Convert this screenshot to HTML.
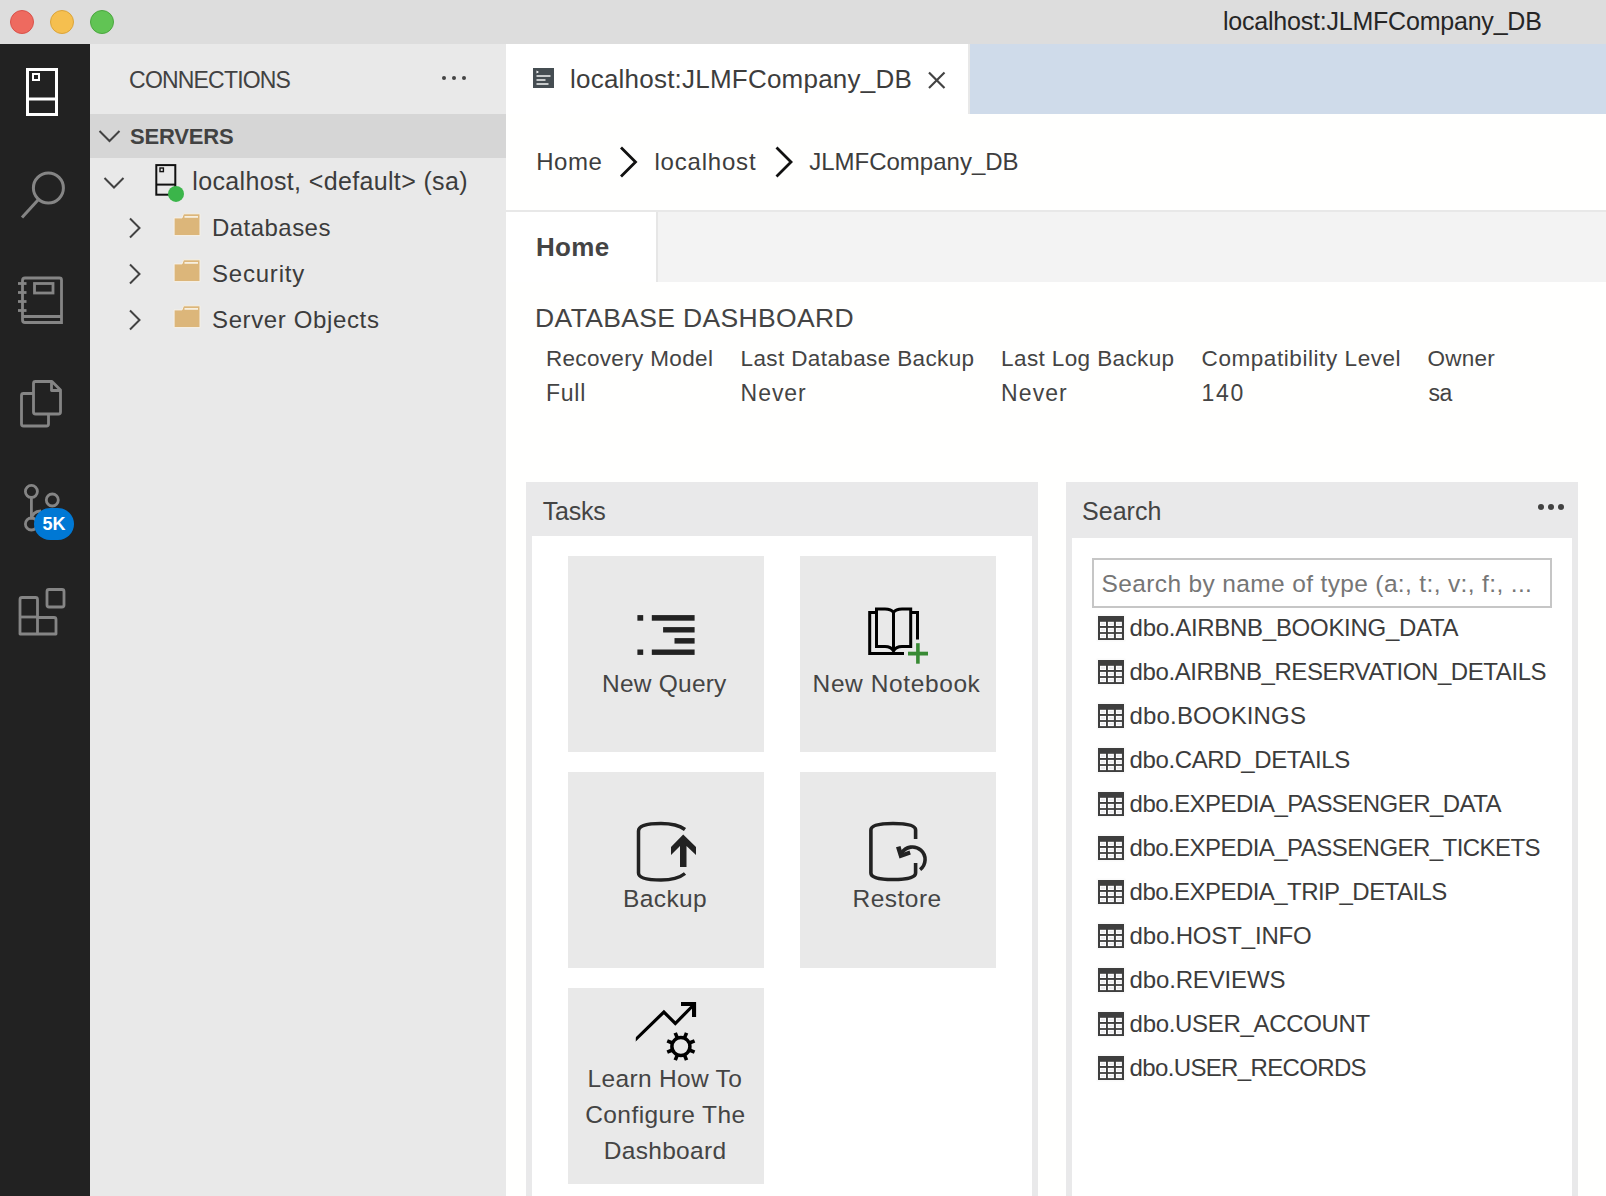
<!DOCTYPE html>
<html><head><meta charset="utf-8"><style>
html,body{margin:0;padding:0;width:1606px;height:1196px;overflow:hidden;background:#fff;}
body{position:relative;font-family:"Liberation Sans",sans-serif;}
.t{position:absolute;white-space:nowrap;line-height:1;}
svg{overflow:visible}
</style></head><body>
<div style="position:absolute;left:0px;top:0px;width:1606px;height:44px;background:#dddddd;"></div>
<div style="position:absolute;left:10px;top:10px;width:24px;height:24px;border-radius:50%;background:#ee6a5f;box-sizing:border-box;border:1px solid #d9524a;"></div>
<div style="position:absolute;left:50px;top:10px;width:24px;height:24px;border-radius:50%;background:#f5bf4f;box-sizing:border-box;border:1px solid #dba43a;"></div>
<div style="position:absolute;left:90px;top:10px;width:24px;height:24px;border-radius:50%;background:#61c454;box-sizing:border-box;border:1px solid #4ba73f;"></div>
<div class="t" style="left:1222.90px;top:9.24px;font-size:25px;letter-spacing:-0.207px;color:#262626;">localhost:JLMFCompany_DB</div>
<div style="position:absolute;left:0px;top:44px;width:90px;height:1152px;background:#222222;"></div>
<svg style="position:absolute;left:0;top:44px" width="90" height="1152" viewBox="0 44 90 1152">
<g fill="none" stroke="#ffffff" stroke-width="3">
<rect x="27.5" y="69.5" width="29" height="45"/>
<line x1="27.5" y1="99" x2="56.5" y2="99"/>
<rect x="33" y="74" width="6" height="6" stroke-width="2"/>
</g>
<g fill="none" stroke="#858585" stroke-width="3" stroke-linecap="butt">
<circle cx="48.4" cy="188" r="15"/>
<line x1="38" y1="200" x2="22" y2="217.5"/>
</g>
<g fill="none" stroke="#858585" stroke-width="2.8">
<path d="M25 278 H59.5 Q61.5 278 61.5 280 V322.5 H25 Q22.5 322.5 22.5 320 V280.5 Q22.5 278 25 278 Z"/>
<line x1="22.5" y1="316.5" x2="61.5" y2="316.5"/>
<rect x="34.5" y="33.5" width="0" height="0"/>
<rect x="34.5" y="283.5" width="18.5" height="9.5"/>
<line x1="18" y1="283.5" x2="26.5" y2="283.5"/>
<line x1="18" y1="292.5" x2="26.5" y2="292.5"/>
<line x1="18" y1="301.5" x2="26.5" y2="301.5"/>
<line x1="18" y1="310.5" x2="26.5" y2="310.5"/>
</g>
<g fill="none" stroke="#858585" stroke-width="2.8" stroke-linejoin="round">
<path d="M33 393.5 H23.5 Q21.5 393.5 21.5 395.5 V424 Q21.5 426 23.5 426 H46.5 Q48.5 426 48.5 424 V414.5"/>
<path d="M35.5 381.5 H52 L60.5 390 V412 Q60.5 414 58.5 414 H35.5 Q33.5 414 33.5 412 V383.5 Q33.5 381.5 35.5 381.5 Z"/>
<path d="M51.5 381.5 V390.5 H60.5"/>
</g>
<g fill="none" stroke="#858585" stroke-width="2.8">
<circle cx="31.4" cy="491.4" r="6"/>
<circle cx="52.3" cy="500" r="6"/>
<circle cx="31.4" cy="524" r="6"/>
<line x1="31.4" y1="497.4" x2="31.4" y2="518"/>
<path d="M31.4 519.5 Q32 511.5 41 511"/>
</g>
<rect x="34" y="508" width="40" height="32" rx="16" fill="#0078d4"/>
<text x="54" y="530" font-family="Liberation Sans" font-weight="bold" font-size="18" fill="#ffffff" text-anchor="middle">5K</text>
<g fill="none" stroke="#858585" stroke-width="2.8" stroke-linejoin="round">
<path d="M20 617 V634 H56 V619.5 Q56 617.5 54 617.5 H37.5 V599.5 Q37.5 597.5 35.5 597.5 H22 Q20 597.5 20 599.5 Z"/>
<line x1="20" y1="617" x2="37.5" y2="617"/>
<line x1="37.5" y1="617" x2="37.5" y2="634"/>
<rect x="47" y="589.5" width="17" height="17.5" rx="2"/>
</g>
</svg>
<div style="position:absolute;left:90px;top:44px;width:416px;height:1152px;background:#e9e9e9;"></div>
<div class="t" style="left:129.10px;top:69.33px;font-size:23px;letter-spacing:-0.811px;color:#424242;">CONNECTIONS</div>
<div style="position:absolute;left:442px;top:76px;width:4px;height:4px;border-radius:50%;background:#444;"></div>
<div style="position:absolute;left:452px;top:76px;width:4px;height:4px;border-radius:50%;background:#444;"></div>
<div style="position:absolute;left:462px;top:76px;width:4px;height:4px;border-radius:50%;background:#444;"></div>
<div style="position:absolute;left:90px;top:114px;width:416px;height:44px;background:#d6d6d6;"></div>
<div class="t" style="left:130.10px;top:125.58px;font-size:22px;font-weight:bold;letter-spacing:-0.212px;color:#424242;">SERVERS</div>
<svg style="position:absolute;left:90px;top:114px" width="416" height="240" viewBox="90 114 416 240">
<g fill="none" stroke="#424242" stroke-width="2">
<polyline points="99.5,131 109.5,141 119.5,131"/>
<polyline points="104.5,178 114,187.5 123.5,178"/>
<polyline points="130,218.5 139.5,228 130,237.5"/>
<polyline points="130,264.5 139.5,274 130,283.5"/>
<polyline points="130,310.5 139.5,320 130,329.5"/>
</g>
<g fill="none" stroke="#111" stroke-width="2">
<rect x="156.3" y="165.1" width="19" height="29.6"/>
<line x1="156.3" y1="184.6" x2="175.3" y2="184.6"/>
<rect x="160" y="168" width="3.4" height="3.6" stroke-width="1.4"/>
</g>
<circle cx="176" cy="193.9" r="8" fill="#3bb54a"/>
</svg>
<div class="t" style="left:192.30px;top:169.34px;font-size:25px;letter-spacing:0.350px;color:#3c3c3c;">localhost, &lt;default&gt; (sa)</div>
<svg style="position:absolute;left:172px;top:212px" width="30" height="26" viewBox="172 212 30 26">
<path d="M174.1 217.9 H182 L183.5 213.8 H200 V235.6 H174.1 Z" fill="#dcb67a" stroke="#f6f1e8" stroke-width="1"/>
<rect x="184.5" y="216" width="13.5" height="1.8" fill="#f7efe0"/>
</svg>
<div class="t" style="left:212.00px;top:215.58px;font-size:24px;letter-spacing:0.458px;color:#3c3c3c;">Databases</div>
<svg style="position:absolute;left:172px;top:258px" width="30" height="26" viewBox="172 212 30 26">
<path d="M174.1 217.9 H182 L183.5 213.8 H200 V235.6 H174.1 Z" fill="#dcb67a" stroke="#f6f1e8" stroke-width="1"/>
<rect x="184.5" y="216" width="13.5" height="1.8" fill="#f7efe0"/>
</svg>
<div class="t" style="left:212.00px;top:261.58px;font-size:24px;letter-spacing:0.786px;color:#3c3c3c;">Security</div>
<svg style="position:absolute;left:172px;top:304px" width="30" height="26" viewBox="172 212 30 26">
<path d="M174.1 217.9 H182 L183.5 213.8 H200 V235.6 H174.1 Z" fill="#dcb67a" stroke="#f6f1e8" stroke-width="1"/>
<rect x="184.5" y="216" width="13.5" height="1.8" fill="#f7efe0"/>
</svg>
<div class="t" style="left:212.00px;top:307.58px;font-size:24px;letter-spacing:0.629px;color:#3c3c3c;">Server Objects</div>
<div style="position:absolute;left:506px;top:44px;width:1100px;height:70px;background:#cfdbea;"></div>
<div style="position:absolute;left:506px;top:44px;width:462px;height:70px;background:#ffffff;"></div>
<div style="position:absolute;left:968px;top:44px;width:2px;height:70px;background:#e8e8e8;"></div>
<svg style="position:absolute;left:530px;top:64px" width="30" height="28" viewBox="530 64 30 28">
<rect x="533" y="68" width="21" height="20" fill="#454d52"/>
<path d="M536.5 70.5 L539 72 L536.5 73.5 Z" fill="#fff"/>
<rect x="536.5" y="75.3" width="14" height="1.4" fill="#fff"/>
<rect x="536.5" y="79.3" width="9" height="1.4" fill="#fff"/>
<rect x="536.5" y="83.3" width="12" height="1.4" fill="#fff"/>
</svg>
<div class="t" style="left:570.00px;top:66.39px;font-size:26px;letter-spacing:0.220px;color:#3d3d3d;">localhost:JLMFCompany_DB</div>
<svg style="position:absolute;left:920px;top:64px" width="32" height="32" viewBox="920 64 32 32">
<g stroke="#424242" stroke-width="2.2"><line x1="929" y1="72.5" x2="944.5" y2="88"/><line x1="944.5" y1="72.5" x2="929" y2="88"/></g>
</svg>
<div style="position:absolute;left:506px;top:114px;width:1100px;height:96px;background:#fffffe;"></div>
<div class="t" style="left:536.30px;top:149.88px;font-size:24px;letter-spacing:0.476px;color:#3d3d3d;">Home</div>
<div class="t" style="left:654.40px;top:149.88px;font-size:24px;letter-spacing:0.806px;color:#3d3d3d;">localhost</div>
<div class="t" style="left:809.20px;top:149.88px;font-size:24px;color:#3d3d3d;">JLMFCompany_DB</div>
<svg style="position:absolute;left:600px;top:130px" width="220" height="60" viewBox="600 130 220 60">
<g fill="none" stroke="#111" stroke-width="2.8">
<polyline points="621,147.5 635.5,162 621,176.5"/>
<polyline points="776.5,147.5 791,162 776.5,176.5"/>
</g></svg>
<div style="position:absolute;left:506px;top:210px;width:1100px;height:2px;background:#e8e8e8;"></div>
<div style="position:absolute;left:506px;top:212px;width:1100px;height:70px;background:#f3f3f3;"></div>
<div style="position:absolute;left:506px;top:212px;width:150px;height:70px;background:#ffffff;"></div>
<div style="position:absolute;left:656px;top:212px;width:2px;height:70px;background:#e6e6e6;"></div>
<div class="t" style="left:536.00px;top:234.39px;font-size:26px;font-weight:bold;letter-spacing:0.341px;color:#444444;">Home</div>
<div style="position:absolute;left:506px;top:282px;width:1100px;height:914px;background:#fffffe;"></div>
<div class="t" style="left:535.10px;top:304.57px;font-size:26.5px;letter-spacing:0.345px;color:#444444;">DATABASE DASHBOARD</div>
<div class="t" style="left:545.90px;top:348.15px;font-size:22.5px;letter-spacing:0.341px;color:#444444;">Recovery Model</div>
<div class="t" style="left:545.90px;top:382.33px;font-size:23px;letter-spacing:0.816px;color:#444444;">Full</div>
<div class="t" style="left:740.60px;top:348.15px;font-size:22.5px;letter-spacing:0.375px;color:#444444;">Last Database Backup</div>
<div class="t" style="left:740.60px;top:382.33px;font-size:23px;letter-spacing:0.952px;color:#444444;">Never</div>
<div class="t" style="left:1001.10px;top:348.15px;font-size:22.5px;letter-spacing:0.385px;color:#444444;">Last Log Backup</div>
<div class="t" style="left:1001.10px;top:382.33px;font-size:23px;letter-spacing:1.077px;color:#444444;">Never</div>
<div class="t" style="left:1201.60px;top:348.15px;font-size:22.5px;letter-spacing:0.565px;color:#444444;">Compatibility Level</div>
<div class="t" style="left:1201.60px;top:382.33px;font-size:23px;letter-spacing:1.708px;color:#444444;">140</div>
<div class="t" style="left:1427.60px;top:348.15px;font-size:22.5px;letter-spacing:0.206px;color:#444444;">Owner</div>
<div class="t" style="left:1428.60px;top:382.33px;font-size:23px;letter-spacing:-0.500px;color:#444444;">sa</div>
<div style="position:absolute;left:526px;top:482px;width:512px;height:714px;background:#e9e9ea;"></div>
<div style="position:absolute;left:532px;top:536px;width:500px;height:660px;background:#ffffff;"></div>
<div class="t" style="left:542.70px;top:499.34px;font-size:25px;letter-spacing:-0.201px;color:#444444;">Tasks</div>
<div style="position:absolute;left:568px;top:556px;width:196px;height:196px;background:#e9e9e9;"></div>
<div style="position:absolute;left:800px;top:556px;width:196px;height:196px;background:#e9e9e9;"></div>
<div style="position:absolute;left:568px;top:772px;width:196px;height:196px;background:#e9e9e9;"></div>
<div style="position:absolute;left:800px;top:772px;width:196px;height:196px;background:#e9e9e9;"></div>
<div style="position:absolute;left:568px;top:988px;width:196px;height:196px;background:#e9e9e9;"></div>
<div class="t" style="left:602.10px;top:671.66px;font-size:24.5px;letter-spacing:0.214px;color:#444444;">New Query</div>
<div class="t" style="left:812.60px;top:671.66px;font-size:24.5px;letter-spacing:0.596px;color:#444444;">New Notebook</div>
<div class="t" style="left:623.10px;top:887.36px;font-size:24.5px;letter-spacing:0.381px;color:#444444;">Backup</div>
<div class="t" style="left:852.60px;top:887.36px;font-size:24.5px;letter-spacing:0.473px;color:#444444;">Restore</div>
<div class="t" style="left:587.60px;top:1067.26px;font-size:24.5px;letter-spacing:0.315px;color:#444444;">Learn How To</div>
<div class="t" style="left:585.20px;top:1103.46px;font-size:24.5px;letter-spacing:0.431px;color:#444444;">Configure The</div>
<div class="t" style="left:603.70px;top:1139.26px;font-size:24.5px;letter-spacing:0.321px;color:#444444;">Dashboard</div>
<svg style="position:absolute;left:568px;top:556px" width="428" height="628" viewBox="568 556 428 628">
<g fill="#222">
<rect x="637.4" y="615.1" width="5.8" height="5.6"/><rect x="651.8" y="615.1" width="42.8" height="5.6"/>
<rect x="663.1" y="627.1" width="31.5" height="5.4"/>
<rect x="674.5" y="638.1" width="20.1" height="5.5"/>
<rect x="637.4" y="649.5" width="5.8" height="5.4"/><rect x="651.8" y="649.5" width="42.8" height="5.4"/>
</g>
<g fill="none" stroke="#000" stroke-width="3" stroke-linejoin="miter">
<path d="M876.5 612.5 H869.7 V653.5 H904"/>
<path d="M910.5 612.5 H917.5 V639.5"/>
<path d="M876.5 646.5 V609 H885 Q891 609 893.5 612.5 Q896 609 902 609 H910.7 V646.5 H902 Q896 646.5 893.5 651 Q891 646.5 885 646.5 Z"/><line x1="893.5" y1="612" x2="893.5" y2="651"/>
</g>
<g fill="#388a34">
<rect x="908" y="651.7" width="20" height="3.8"/>
<rect x="916.1" y="643.2" width="3.6" height="20.5"/>
</g>
<g fill="none" stroke="#222" stroke-width="3.5">
<path d="M685 829.5 Q677 823.5 661 823.5 Q638.5 823.5 638.5 831 V873 Q638.5 880 661 880 Q677 880 685 873.5"/>
</g>
<path d="M683.2 834.5 L696 847 V855 L686.5 846 V867 H680 V846 L671 855 V847 Z" fill="#222"/>
<g fill="none" stroke="#222" stroke-width="3.6">
<path d="M915.6 839 V830 Q915.6 823.5 893 823.5 Q870.9 823.5 870.9 830 V873 Q870.9 879.5 893 879.5 Q915.6 879.5 915.6 873 V863"/>
<path d="M901.6 853.2 A12.6 12.6 0 1 1 920.1 869.6"/>
</g>
<path d="M896 847.3 L900.5 846 L902.5 853 L909.5 850.6 L910.8 854.5 L899.5 858.5 Z" fill="#222"/>
<defs><clipPath id="lclip"><rect x="635.8" y="990" width="80" height="80"/></clipPath></defs><g fill="none" stroke="#000" stroke-width="3.2" stroke-linejoin="miter">
<path clip-path="url(#lclip)" d="M630 1045 L663.9 1012 L675.3 1023.5 L694 1004.5"/>
</g>
<path d="M681 1002 H696.1 V1017 H692 V1006 H681 Z" fill="#000"/>
<g transform="translate(680.9 1046.5)">
<circle r="9" fill="none" stroke="#000" stroke-width="3.5"/>
<g fill="#000">
<rect x="-1.8" y="-14.8" width="3.6" height="6.3" transform="rotate(22.5)"/>
<rect x="-1.8" y="-14.8" width="3.6" height="6.3" transform="rotate(67.5)"/>
<rect x="-1.8" y="-14.8" width="3.6" height="6.3" transform="rotate(112.5)"/>
<rect x="-1.8" y="-14.8" width="3.6" height="6.3" transform="rotate(157.5)"/>
<rect x="-1.8" y="-14.8" width="3.6" height="6.3" transform="rotate(202.5)"/>
<rect x="-1.8" y="-14.8" width="3.6" height="6.3" transform="rotate(247.5)"/>
<rect x="-1.8" y="-14.8" width="3.6" height="6.3" transform="rotate(292.5)"/>
<rect x="-1.8" y="-14.8" width="3.6" height="6.3" transform="rotate(337.5)"/>
</g></g>
</svg>
<div style="position:absolute;left:1066px;top:482px;width:512px;height:714px;background:#e9e9ea;"></div>
<div style="position:absolute;left:1072px;top:538px;width:500px;height:658px;background:#ffffff;"></div>
<div class="t" style="left:1082.10px;top:499.04px;font-size:25px;color:#444444;">Search</div>
<div style="position:absolute;left:1538px;top:504px;width:6px;height:6px;border-radius:50%;background:#424242;"></div>
<div style="position:absolute;left:1548px;top:504px;width:6px;height:6px;border-radius:50%;background:#424242;"></div>
<div style="position:absolute;left:1558px;top:504px;width:6px;height:6px;border-radius:50%;background:#424242;"></div>
<div style="position:absolute;left:1092px;top:558px;width:460px;height:50px;box-sizing:border-box;border:2px solid #c6c6c6;background:#fff;"></div>
<div class="t" style="left:1101.60px;top:571.66px;font-size:24.5px;letter-spacing:0.357px;color:#767676;">Search by name of type (a:, t:, v:, f:, ...</div>
<svg style="position:absolute;left:1092px;top:610px" width="40" height="34" viewBox="1092 610 40 34"><rect x="1096.5" y="614.5" width="29" height="27" fill="#fafafa"/><rect x="1098" y="616" width="26" height="24" fill="#3e3e3e"/><g transform="translate(1092 610)"><rect x="8" y="11.8" width="6" height="4.2" fill="#ffffff"/><rect x="9" y="12.8" width="4" height="2.2" fill="#ececf0"/><rect x="15.9" y="11.8" width="6" height="4.2" fill="#ffffff"/><rect x="16.9" y="12.8" width="4" height="2.2" fill="#ececf0"/><rect x="23.9" y="11.8" width="6" height="4.2" fill="#ffffff"/><rect x="24.9" y="12.8" width="4" height="2.2" fill="#ececf0"/><rect x="8" y="17.9" width="6" height="4.2" fill="#ffffff"/><rect x="9" y="18.9" width="4" height="2.2" fill="#ececf0"/><rect x="15.9" y="17.9" width="6" height="4.2" fill="#ffffff"/><rect x="16.9" y="18.9" width="4" height="2.2" fill="#ececf0"/><rect x="23.9" y="17.9" width="6" height="4.2" fill="#ffffff"/><rect x="24.9" y="18.9" width="4" height="2.2" fill="#ececf0"/><rect x="8" y="23.9" width="6" height="4.2" fill="#ffffff"/><rect x="9" y="24.9" width="4" height="2.2" fill="#ececf0"/><rect x="15.9" y="23.9" width="6" height="4.2" fill="#ffffff"/><rect x="16.9" y="24.9" width="4" height="2.2" fill="#ececf0"/><rect x="23.9" y="23.9" width="6" height="4.2" fill="#ffffff"/><rect x="24.9" y="24.9" width="4" height="2.2" fill="#ececf0"/></g></svg>
<div class="t" style="left:1129.60px;top:615.78px;font-size:24px;letter-spacing:-0.283px;color:#3c3c3c;">dbo.AIRBNB_BOOKING_DATA</div>
<svg style="position:absolute;left:1092px;top:654px" width="40" height="34" viewBox="1092 610 40 34"><rect x="1096.5" y="614.5" width="29" height="27" fill="#fafafa"/><rect x="1098" y="616" width="26" height="24" fill="#3e3e3e"/><g transform="translate(1092 610)"><rect x="8" y="11.8" width="6" height="4.2" fill="#ffffff"/><rect x="9" y="12.8" width="4" height="2.2" fill="#ececf0"/><rect x="15.9" y="11.8" width="6" height="4.2" fill="#ffffff"/><rect x="16.9" y="12.8" width="4" height="2.2" fill="#ececf0"/><rect x="23.9" y="11.8" width="6" height="4.2" fill="#ffffff"/><rect x="24.9" y="12.8" width="4" height="2.2" fill="#ececf0"/><rect x="8" y="17.9" width="6" height="4.2" fill="#ffffff"/><rect x="9" y="18.9" width="4" height="2.2" fill="#ececf0"/><rect x="15.9" y="17.9" width="6" height="4.2" fill="#ffffff"/><rect x="16.9" y="18.9" width="4" height="2.2" fill="#ececf0"/><rect x="23.9" y="17.9" width="6" height="4.2" fill="#ffffff"/><rect x="24.9" y="18.9" width="4" height="2.2" fill="#ececf0"/><rect x="8" y="23.9" width="6" height="4.2" fill="#ffffff"/><rect x="9" y="24.9" width="4" height="2.2" fill="#ececf0"/><rect x="15.9" y="23.9" width="6" height="4.2" fill="#ffffff"/><rect x="16.9" y="24.9" width="4" height="2.2" fill="#ececf0"/><rect x="23.9" y="23.9" width="6" height="4.2" fill="#ffffff"/><rect x="24.9" y="24.9" width="4" height="2.2" fill="#ececf0"/></g></svg>
<div class="t" style="left:1129.60px;top:659.78px;font-size:24px;letter-spacing:-0.415px;color:#3c3c3c;">dbo.AIRBNB_RESERVATION_DETAILS</div>
<svg style="position:absolute;left:1092px;top:698px" width="40" height="34" viewBox="1092 610 40 34"><rect x="1096.5" y="614.5" width="29" height="27" fill="#fafafa"/><rect x="1098" y="616" width="26" height="24" fill="#3e3e3e"/><g transform="translate(1092 610)"><rect x="8" y="11.8" width="6" height="4.2" fill="#ffffff"/><rect x="9" y="12.8" width="4" height="2.2" fill="#ececf0"/><rect x="15.9" y="11.8" width="6" height="4.2" fill="#ffffff"/><rect x="16.9" y="12.8" width="4" height="2.2" fill="#ececf0"/><rect x="23.9" y="11.8" width="6" height="4.2" fill="#ffffff"/><rect x="24.9" y="12.8" width="4" height="2.2" fill="#ececf0"/><rect x="8" y="17.9" width="6" height="4.2" fill="#ffffff"/><rect x="9" y="18.9" width="4" height="2.2" fill="#ececf0"/><rect x="15.9" y="17.9" width="6" height="4.2" fill="#ffffff"/><rect x="16.9" y="18.9" width="4" height="2.2" fill="#ececf0"/><rect x="23.9" y="17.9" width="6" height="4.2" fill="#ffffff"/><rect x="24.9" y="18.9" width="4" height="2.2" fill="#ececf0"/><rect x="8" y="23.9" width="6" height="4.2" fill="#ffffff"/><rect x="9" y="24.9" width="4" height="2.2" fill="#ececf0"/><rect x="15.9" y="23.9" width="6" height="4.2" fill="#ffffff"/><rect x="16.9" y="24.9" width="4" height="2.2" fill="#ececf0"/><rect x="23.9" y="23.9" width="6" height="4.2" fill="#ffffff"/><rect x="24.9" y="24.9" width="4" height="2.2" fill="#ececf0"/></g></svg>
<div class="t" style="left:1129.60px;top:703.78px;font-size:24px;letter-spacing:0.143px;color:#3c3c3c;">dbo.BOOKINGS</div>
<svg style="position:absolute;left:1092px;top:742px" width="40" height="34" viewBox="1092 610 40 34"><rect x="1096.5" y="614.5" width="29" height="27" fill="#fafafa"/><rect x="1098" y="616" width="26" height="24" fill="#3e3e3e"/><g transform="translate(1092 610)"><rect x="8" y="11.8" width="6" height="4.2" fill="#ffffff"/><rect x="9" y="12.8" width="4" height="2.2" fill="#ececf0"/><rect x="15.9" y="11.8" width="6" height="4.2" fill="#ffffff"/><rect x="16.9" y="12.8" width="4" height="2.2" fill="#ececf0"/><rect x="23.9" y="11.8" width="6" height="4.2" fill="#ffffff"/><rect x="24.9" y="12.8" width="4" height="2.2" fill="#ececf0"/><rect x="8" y="17.9" width="6" height="4.2" fill="#ffffff"/><rect x="9" y="18.9" width="4" height="2.2" fill="#ececf0"/><rect x="15.9" y="17.9" width="6" height="4.2" fill="#ffffff"/><rect x="16.9" y="18.9" width="4" height="2.2" fill="#ececf0"/><rect x="23.9" y="17.9" width="6" height="4.2" fill="#ffffff"/><rect x="24.9" y="18.9" width="4" height="2.2" fill="#ececf0"/><rect x="8" y="23.9" width="6" height="4.2" fill="#ffffff"/><rect x="9" y="24.9" width="4" height="2.2" fill="#ececf0"/><rect x="15.9" y="23.9" width="6" height="4.2" fill="#ffffff"/><rect x="16.9" y="24.9" width="4" height="2.2" fill="#ececf0"/><rect x="23.9" y="23.9" width="6" height="4.2" fill="#ffffff"/><rect x="24.9" y="24.9" width="4" height="2.2" fill="#ececf0"/></g></svg>
<div class="t" style="left:1129.60px;top:747.78px;font-size:24px;letter-spacing:-0.380px;color:#3c3c3c;">dbo.CARD_DETAILS</div>
<svg style="position:absolute;left:1092px;top:786px" width="40" height="34" viewBox="1092 610 40 34"><rect x="1096.5" y="614.5" width="29" height="27" fill="#fafafa"/><rect x="1098" y="616" width="26" height="24" fill="#3e3e3e"/><g transform="translate(1092 610)"><rect x="8" y="11.8" width="6" height="4.2" fill="#ffffff"/><rect x="9" y="12.8" width="4" height="2.2" fill="#ececf0"/><rect x="15.9" y="11.8" width="6" height="4.2" fill="#ffffff"/><rect x="16.9" y="12.8" width="4" height="2.2" fill="#ececf0"/><rect x="23.9" y="11.8" width="6" height="4.2" fill="#ffffff"/><rect x="24.9" y="12.8" width="4" height="2.2" fill="#ececf0"/><rect x="8" y="17.9" width="6" height="4.2" fill="#ffffff"/><rect x="9" y="18.9" width="4" height="2.2" fill="#ececf0"/><rect x="15.9" y="17.9" width="6" height="4.2" fill="#ffffff"/><rect x="16.9" y="18.9" width="4" height="2.2" fill="#ececf0"/><rect x="23.9" y="17.9" width="6" height="4.2" fill="#ffffff"/><rect x="24.9" y="18.9" width="4" height="2.2" fill="#ececf0"/><rect x="8" y="23.9" width="6" height="4.2" fill="#ffffff"/><rect x="9" y="24.9" width="4" height="2.2" fill="#ececf0"/><rect x="15.9" y="23.9" width="6" height="4.2" fill="#ffffff"/><rect x="16.9" y="24.9" width="4" height="2.2" fill="#ececf0"/><rect x="23.9" y="23.9" width="6" height="4.2" fill="#ffffff"/><rect x="24.9" y="24.9" width="4" height="2.2" fill="#ececf0"/></g></svg>
<div class="t" style="left:1129.60px;top:791.78px;font-size:24px;letter-spacing:-0.539px;color:#3c3c3c;">dbo.EXPEDIA_PASSENGER_DATA</div>
<svg style="position:absolute;left:1092px;top:830px" width="40" height="34" viewBox="1092 610 40 34"><rect x="1096.5" y="614.5" width="29" height="27" fill="#fafafa"/><rect x="1098" y="616" width="26" height="24" fill="#3e3e3e"/><g transform="translate(1092 610)"><rect x="8" y="11.8" width="6" height="4.2" fill="#ffffff"/><rect x="9" y="12.8" width="4" height="2.2" fill="#ececf0"/><rect x="15.9" y="11.8" width="6" height="4.2" fill="#ffffff"/><rect x="16.9" y="12.8" width="4" height="2.2" fill="#ececf0"/><rect x="23.9" y="11.8" width="6" height="4.2" fill="#ffffff"/><rect x="24.9" y="12.8" width="4" height="2.2" fill="#ececf0"/><rect x="8" y="17.9" width="6" height="4.2" fill="#ffffff"/><rect x="9" y="18.9" width="4" height="2.2" fill="#ececf0"/><rect x="15.9" y="17.9" width="6" height="4.2" fill="#ffffff"/><rect x="16.9" y="18.9" width="4" height="2.2" fill="#ececf0"/><rect x="23.9" y="17.9" width="6" height="4.2" fill="#ffffff"/><rect x="24.9" y="18.9" width="4" height="2.2" fill="#ececf0"/><rect x="8" y="23.9" width="6" height="4.2" fill="#ffffff"/><rect x="9" y="24.9" width="4" height="2.2" fill="#ececf0"/><rect x="15.9" y="23.9" width="6" height="4.2" fill="#ffffff"/><rect x="16.9" y="24.9" width="4" height="2.2" fill="#ececf0"/><rect x="23.9" y="23.9" width="6" height="4.2" fill="#ffffff"/><rect x="24.9" y="24.9" width="4" height="2.2" fill="#ececf0"/></g></svg>
<div class="t" style="left:1129.60px;top:835.78px;font-size:24px;letter-spacing:-0.549px;color:#3c3c3c;">dbo.EXPEDIA_PASSENGER_TICKETS</div>
<svg style="position:absolute;left:1092px;top:874px" width="40" height="34" viewBox="1092 610 40 34"><rect x="1096.5" y="614.5" width="29" height="27" fill="#fafafa"/><rect x="1098" y="616" width="26" height="24" fill="#3e3e3e"/><g transform="translate(1092 610)"><rect x="8" y="11.8" width="6" height="4.2" fill="#ffffff"/><rect x="9" y="12.8" width="4" height="2.2" fill="#ececf0"/><rect x="15.9" y="11.8" width="6" height="4.2" fill="#ffffff"/><rect x="16.9" y="12.8" width="4" height="2.2" fill="#ececf0"/><rect x="23.9" y="11.8" width="6" height="4.2" fill="#ffffff"/><rect x="24.9" y="12.8" width="4" height="2.2" fill="#ececf0"/><rect x="8" y="17.9" width="6" height="4.2" fill="#ffffff"/><rect x="9" y="18.9" width="4" height="2.2" fill="#ececf0"/><rect x="15.9" y="17.9" width="6" height="4.2" fill="#ffffff"/><rect x="16.9" y="18.9" width="4" height="2.2" fill="#ececf0"/><rect x="23.9" y="17.9" width="6" height="4.2" fill="#ffffff"/><rect x="24.9" y="18.9" width="4" height="2.2" fill="#ececf0"/><rect x="8" y="23.9" width="6" height="4.2" fill="#ffffff"/><rect x="9" y="24.9" width="4" height="2.2" fill="#ececf0"/><rect x="15.9" y="23.9" width="6" height="4.2" fill="#ffffff"/><rect x="16.9" y="24.9" width="4" height="2.2" fill="#ececf0"/><rect x="23.9" y="23.9" width="6" height="4.2" fill="#ffffff"/><rect x="24.9" y="24.9" width="4" height="2.2" fill="#ececf0"/></g></svg>
<div class="t" style="left:1129.60px;top:879.78px;font-size:24px;letter-spacing:-0.550px;color:#3c3c3c;">dbo.EXPEDIA_TRIP_DETAILS</div>
<svg style="position:absolute;left:1092px;top:918px" width="40" height="34" viewBox="1092 610 40 34"><rect x="1096.5" y="614.5" width="29" height="27" fill="#fafafa"/><rect x="1098" y="616" width="26" height="24" fill="#3e3e3e"/><g transform="translate(1092 610)"><rect x="8" y="11.8" width="6" height="4.2" fill="#ffffff"/><rect x="9" y="12.8" width="4" height="2.2" fill="#ececf0"/><rect x="15.9" y="11.8" width="6" height="4.2" fill="#ffffff"/><rect x="16.9" y="12.8" width="4" height="2.2" fill="#ececf0"/><rect x="23.9" y="11.8" width="6" height="4.2" fill="#ffffff"/><rect x="24.9" y="12.8" width="4" height="2.2" fill="#ececf0"/><rect x="8" y="17.9" width="6" height="4.2" fill="#ffffff"/><rect x="9" y="18.9" width="4" height="2.2" fill="#ececf0"/><rect x="15.9" y="17.9" width="6" height="4.2" fill="#ffffff"/><rect x="16.9" y="18.9" width="4" height="2.2" fill="#ececf0"/><rect x="23.9" y="17.9" width="6" height="4.2" fill="#ffffff"/><rect x="24.9" y="18.9" width="4" height="2.2" fill="#ececf0"/><rect x="8" y="23.9" width="6" height="4.2" fill="#ffffff"/><rect x="9" y="24.9" width="4" height="2.2" fill="#ececf0"/><rect x="15.9" y="23.9" width="6" height="4.2" fill="#ffffff"/><rect x="16.9" y="24.9" width="4" height="2.2" fill="#ececf0"/><rect x="23.9" y="23.9" width="6" height="4.2" fill="#ffffff"/><rect x="24.9" y="24.9" width="4" height="2.2" fill="#ececf0"/></g></svg>
<div class="t" style="left:1129.60px;top:923.78px;font-size:24px;letter-spacing:-0.157px;color:#3c3c3c;">dbo.HOST_INFO</div>
<svg style="position:absolute;left:1092px;top:962px" width="40" height="34" viewBox="1092 610 40 34"><rect x="1096.5" y="614.5" width="29" height="27" fill="#fafafa"/><rect x="1098" y="616" width="26" height="24" fill="#3e3e3e"/><g transform="translate(1092 610)"><rect x="8" y="11.8" width="6" height="4.2" fill="#ffffff"/><rect x="9" y="12.8" width="4" height="2.2" fill="#ececf0"/><rect x="15.9" y="11.8" width="6" height="4.2" fill="#ffffff"/><rect x="16.9" y="12.8" width="4" height="2.2" fill="#ececf0"/><rect x="23.9" y="11.8" width="6" height="4.2" fill="#ffffff"/><rect x="24.9" y="12.8" width="4" height="2.2" fill="#ececf0"/><rect x="8" y="17.9" width="6" height="4.2" fill="#ffffff"/><rect x="9" y="18.9" width="4" height="2.2" fill="#ececf0"/><rect x="15.9" y="17.9" width="6" height="4.2" fill="#ffffff"/><rect x="16.9" y="18.9" width="4" height="2.2" fill="#ececf0"/><rect x="23.9" y="17.9" width="6" height="4.2" fill="#ffffff"/><rect x="24.9" y="18.9" width="4" height="2.2" fill="#ececf0"/><rect x="8" y="23.9" width="6" height="4.2" fill="#ffffff"/><rect x="9" y="24.9" width="4" height="2.2" fill="#ececf0"/><rect x="15.9" y="23.9" width="6" height="4.2" fill="#ffffff"/><rect x="16.9" y="24.9" width="4" height="2.2" fill="#ececf0"/><rect x="23.9" y="23.9" width="6" height="4.2" fill="#ffffff"/><rect x="24.9" y="24.9" width="4" height="2.2" fill="#ececf0"/></g></svg>
<div class="t" style="left:1129.60px;top:967.78px;font-size:24px;letter-spacing:-0.159px;color:#3c3c3c;">dbo.REVIEWS</div>
<svg style="position:absolute;left:1092px;top:1006px" width="40" height="34" viewBox="1092 610 40 34"><rect x="1096.5" y="614.5" width="29" height="27" fill="#fafafa"/><rect x="1098" y="616" width="26" height="24" fill="#3e3e3e"/><g transform="translate(1092 610)"><rect x="8" y="11.8" width="6" height="4.2" fill="#ffffff"/><rect x="9" y="12.8" width="4" height="2.2" fill="#ececf0"/><rect x="15.9" y="11.8" width="6" height="4.2" fill="#ffffff"/><rect x="16.9" y="12.8" width="4" height="2.2" fill="#ececf0"/><rect x="23.9" y="11.8" width="6" height="4.2" fill="#ffffff"/><rect x="24.9" y="12.8" width="4" height="2.2" fill="#ececf0"/><rect x="8" y="17.9" width="6" height="4.2" fill="#ffffff"/><rect x="9" y="18.9" width="4" height="2.2" fill="#ececf0"/><rect x="15.9" y="17.9" width="6" height="4.2" fill="#ffffff"/><rect x="16.9" y="18.9" width="4" height="2.2" fill="#ececf0"/><rect x="23.9" y="17.9" width="6" height="4.2" fill="#ffffff"/><rect x="24.9" y="18.9" width="4" height="2.2" fill="#ececf0"/><rect x="8" y="23.9" width="6" height="4.2" fill="#ffffff"/><rect x="9" y="24.9" width="4" height="2.2" fill="#ececf0"/><rect x="15.9" y="23.9" width="6" height="4.2" fill="#ffffff"/><rect x="16.9" y="24.9" width="4" height="2.2" fill="#ececf0"/><rect x="23.9" y="23.9" width="6" height="4.2" fill="#ffffff"/><rect x="24.9" y="24.9" width="4" height="2.2" fill="#ececf0"/></g></svg>
<div class="t" style="left:1129.60px;top:1011.78px;font-size:24px;letter-spacing:-0.316px;color:#3c3c3c;">dbo.USER_ACCOUNT</div>
<svg style="position:absolute;left:1092px;top:1050px" width="40" height="34" viewBox="1092 610 40 34"><rect x="1096.5" y="614.5" width="29" height="27" fill="#fafafa"/><rect x="1098" y="616" width="26" height="24" fill="#3e3e3e"/><g transform="translate(1092 610)"><rect x="8" y="11.8" width="6" height="4.2" fill="#ffffff"/><rect x="9" y="12.8" width="4" height="2.2" fill="#ececf0"/><rect x="15.9" y="11.8" width="6" height="4.2" fill="#ffffff"/><rect x="16.9" y="12.8" width="4" height="2.2" fill="#ececf0"/><rect x="23.9" y="11.8" width="6" height="4.2" fill="#ffffff"/><rect x="24.9" y="12.8" width="4" height="2.2" fill="#ececf0"/><rect x="8" y="17.9" width="6" height="4.2" fill="#ffffff"/><rect x="9" y="18.9" width="4" height="2.2" fill="#ececf0"/><rect x="15.9" y="17.9" width="6" height="4.2" fill="#ffffff"/><rect x="16.9" y="18.9" width="4" height="2.2" fill="#ececf0"/><rect x="23.9" y="17.9" width="6" height="4.2" fill="#ffffff"/><rect x="24.9" y="18.9" width="4" height="2.2" fill="#ececf0"/><rect x="8" y="23.9" width="6" height="4.2" fill="#ffffff"/><rect x="9" y="24.9" width="4" height="2.2" fill="#ececf0"/><rect x="15.9" y="23.9" width="6" height="4.2" fill="#ffffff"/><rect x="16.9" y="24.9" width="4" height="2.2" fill="#ececf0"/><rect x="23.9" y="23.9" width="6" height="4.2" fill="#ffffff"/><rect x="24.9" y="24.9" width="4" height="2.2" fill="#ececf0"/></g></svg>
<div class="t" style="left:1129.60px;top:1055.78px;font-size:24px;letter-spacing:-0.649px;color:#3c3c3c;">dbo.USER_RECORDS</div>
</body></html>
